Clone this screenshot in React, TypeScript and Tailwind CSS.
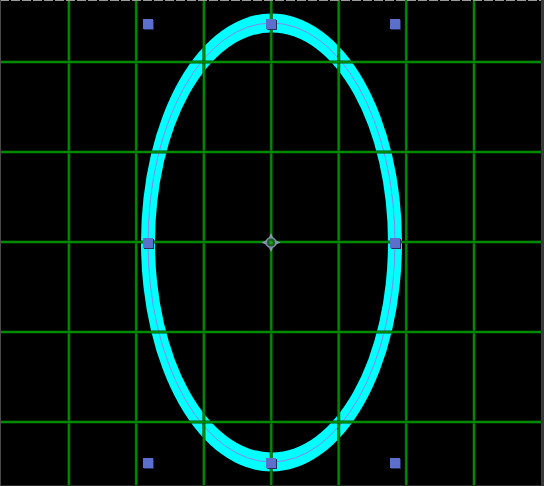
import React from "react";

const xs = [68.9, 136.2, 203.9, 271.2, 338.7, 406.2, 474];
const ys = [62, 152, 242, 332, 422];
const handles: [number, number][] = [
  [148, 24], [271, 24], [395, 24],
  [148, 243], [395, 243],
  [148, 463], [271, 463], [395, 463],
];

export default function App() {
  return (
    <div className="w-[544px] h-[486px] bg-black relative overflow-hidden border-l border-l-[#4a4a4a] border-r-[3px] border-r-[#3a3a3a] border-b border-b-[#2a2a2a]">
      <svg width="544" height="486" className="absolute left-[-1px] top-0" viewBox="0 0 544 486">
        {/* ellipse band */}
        <ellipse cx="271.5" cy="242.5" rx="130.5" ry="229" fill="#00ffff" />
        <ellipse cx="271.5" cy="242.5" rx="116.5" ry="210" fill="#000000" />
        <ellipse cx="271.5" cy="242.5" rx="123.5" ry="219.5" fill="none" stroke="#8a86f0" strokeWidth="1" />
        {/* grid */}
        {xs.map((x) => (
          <g key={"v" + x}>
            <line x1={x} y1={0} x2={x} y2={486} stroke="#004a00" strokeWidth="3" />
            <line x1={x} y1={0} x2={x} y2={486} stroke="#008a00" strokeWidth="2" />
          </g>
        ))}
        {ys.map((y) => (
          <g key={"h" + y}>
            <line x1={0} y1={y} x2={544} y2={y} stroke="#004a00" strokeWidth="3" />
            <line x1={0} y1={y} x2={544} y2={y} stroke="#008a00" strokeWidth="2" />
          </g>
        ))}
        {/* handles */}
        {handles.map(([x, y]) => (
          <g key={x + "-" + y}>
            <rect x={x - 4} y={y - 4} width="10" height="10" fill="#27305a" />
            <rect x={x - 5} y={y - 5} width="10" height="10" fill="#5b6fcc" />
          </g>
        ))}
        {/* center marker */}
        <path
          d="M271,233 L274,239.5 L280.5,242.5 L274,245.5 L271,252 L268,245.5 L261.5,242.5 L268,239.5 Z"
          fill="#8a9ab2"
        />
        <circle cx="271" cy="242.5" r="4.8" fill="#1c5a22" stroke="#7d8ea8" strokeWidth="1.6" />
        <circle cx="271" cy="242.5" r="2" fill="#1a9a1a" />
        {/* top dashed edge */}
        <line x1="0" y1="0.5" x2="544" y2="0.5" stroke="#9a9a9a" strokeWidth="1" strokeDasharray="9 2" />
      </svg>
    </div>
  );
}
